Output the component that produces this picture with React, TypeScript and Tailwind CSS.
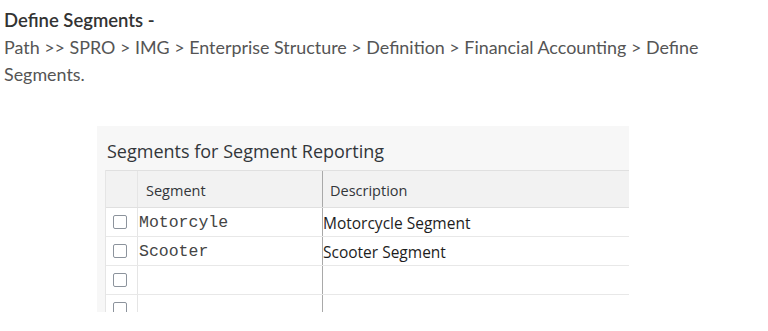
import React from 'react';

const rows = [
    { segment: 'Motorcyle', description: 'Motorcycle Segment' },
    { segment: 'Scooter', description: 'Scooter Segment' },
    { segment: '', description: '' },
    { segment: '', description: '' },
];

function Checkbox() {
    return <span className="block w-[14px] h-[14px] border border-[#8c939c] rounded-[2px] bg-white" />;
}

export default function App() {
    return (
        <div className="w-[768px] h-[331px] bg-white overflow-hidden font-['Lato',sans-serif]">
            <div className="pl-[4px] pt-[7px]">
                <h2 className="text-[18.5px] leading-[27px] font-semibold text-[#333]">
                    Define Segments -
                </h2>
                <p className="text-[17.9px] leading-[27px] text-[#555]">
                    Path &gt;&gt; SPRO &gt; IMG &gt; Enterprise Structure &gt; Definition &gt; Financial Accounting &gt; Define
                    <br />
                    Segments.
                </p>
            </div>

            <div className="ml-[97px] mt-[38px] w-[532px] h-[186px] bg-[#f7f7f7] overflow-hidden font-['Open_Sans',sans-serif]">
                <div className="h-[44px] pl-[10px] pt-[13px] text-[18px] leading-[24px] text-[#32363a]">
                    Segments for Segment Reporting
                </div>
                <div className="ml-[8px] border-l border-[#e5e5e5] bg-white">
                    <div className="flex h-[38px] bg-[#f2f2f2] border-t border-b border-[#e0e0e0] text-[14.5px] text-[#32363a]">
                        <div className="w-[32px] border-r border-[#e5e5e5]" />
                        <div className="w-[185px] pl-[8px] pt-[3px] flex items-center border-r border-[#a9a9a9]">Segment</div>
                        <div className="flex-1 pl-[7px] pt-[3px] flex items-center">Description</div>
                    </div>
                    {rows.map((r, i) => (
                        <div key={i} className="flex h-[29px] border-b border-[#e8e8e8]">
                            <div className="w-[32px] flex items-center pl-[7px] border-r border-[#e5e5e5]">
                                <Checkbox />
                            </div>
                            <div className="w-[185px] flex items-center pl-[1px] pt-[3px] border-r border-[#a9a9a9] font-['Liberation_Mono',monospace] text-[16.5px] text-[#444]">
                                {r.segment}
                            </div>
                            <div className="flex-1 flex items-center pt-[3px] text-[15.5px] text-[#1d1d1d]">
                                {r.description}
                            </div>
                        </div>
                    ))}
                </div>
            </div>
        </div>
    );
}
